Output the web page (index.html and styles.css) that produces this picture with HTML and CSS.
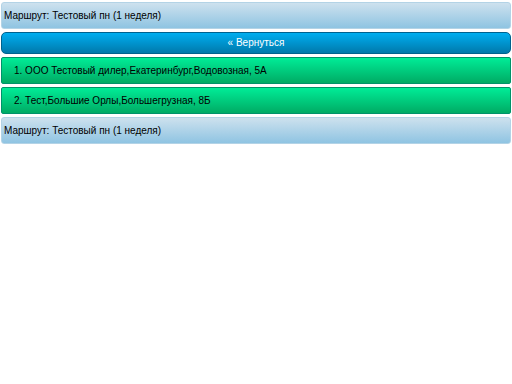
FILE: index.html
```html
<!DOCTYPE html>
<html lang="ru">

<head>
  <meta charset="UTF-8">
  <title>Маршрут</title>
  <link rel="stylesheet" href="styles.css">
</head>

<body>

  <div class="route-bar">Маршрут: Тестовый пн (1 неделя)</div>

  <a class="back-btn" href="#">« Вернуться</a>

  <ul class="points">
    <li class="point">1. ООО Тестовый дилер,Екатеринбург,Водовозная, 5А</li>
    <li class="point">2. Тест,Большие Орлы,Большегрузная, 8Б</li>
  </ul>

  <div class="route-bar">Маршрут: Тестовый пн (1 неделя)</div>

</body>

</html>
```

FILE: styles.css
```css
body {
  margin: 0;
  padding: 2px 1px;
  font-family: "Liberation Sans", Arial, sans-serif;
  font-size: 10px;
  color: #000;
  background: #fff;
  display: flex;
  flex-direction: column;
  gap: 3px;
}

.route-bar {
  height: 25px;
  line-height: 25px;
  padding: 0 2px;
  border: 1px solid #b3d3e6;
  border-radius: 3px;
  background: linear-gradient(to bottom, #cde1ee, #8fc4e2);
}

.back-btn {
  display: block;
  height: 20px;
  line-height: 20px;
  text-align: center;
  color: #fff;
  text-decoration: none;
  border: 1px solid #00628e;
  border-radius: 5px;
  background: linear-gradient(to bottom, #00aef0, #0079ab);
}

.points {
  list-style: none;
  margin: 0;
  padding: 0;
  display: flex;
  flex-direction: column;
  gap: 3px;
}

.point {
  height: 25px;
  line-height: 25px;
  padding: 0 12px;
  border: 1px solid #00936a;
  border-radius: 2px;
  background: linear-gradient(to bottom, #00ec97, #00ab64);
}
```
